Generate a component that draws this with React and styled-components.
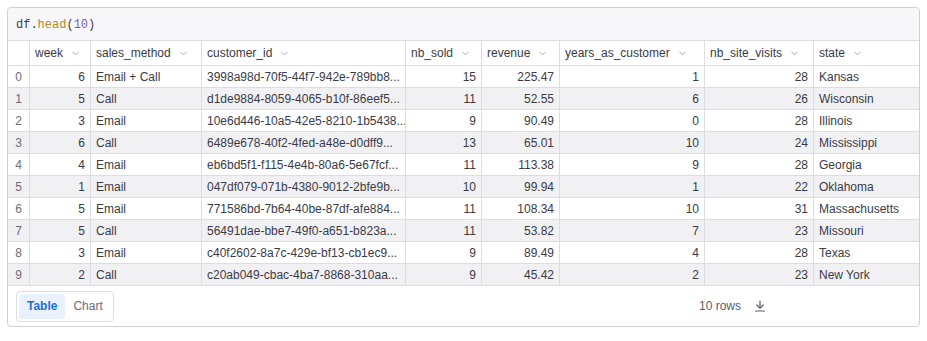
import styled, { createGlobalStyle } from 'styled-components';
import { ChevronDown } from 'lucide-react';

const GlobalStyle = createGlobalStyle`
    * { box-sizing: border-box; }
    body {
        margin: 0;
        background: #ffffff;
        font-family: "Liberation Sans", Arial, sans-serif;
        color: #2e2e3a;
    }
`;

const columns = [
    { key: 'week', label: 'week', width: 61, align: 'right' },
    { key: 'sales_method', label: 'sales_method', width: 111, align: 'left' },
    { key: 'customer_id', label: 'customer_id', width: 204, align: 'left' },
    { key: 'nb_sold', label: 'nb_sold', width: 76, align: 'right' },
    { key: 'revenue', label: 'revenue', width: 78, align: 'right' },
    { key: 'years_as_customer', label: 'years_as_customer', width: 145, align: 'right' },
    { key: 'nb_site_visits', label: 'nb_site_visits', width: 109, align: 'right' },
    { key: 'state', label: 'state', width: 105, align: 'left' },
];

const rows = [
    [6, 'Email + Call', '3998a98d-70f5-44f7-942e-789bb8...', 15, '225.47', 1, 28, 'Kansas'],
    [5, 'Call', 'd1de9884-8059-4065-b10f-86eef5...', 11, '52.55', 6, 26, 'Wisconsin'],
    [3, 'Email', '10e6d446-10a5-42e5-8210-1b5438...', 9, '90.49', 0, 28, 'Illinois'],
    [6, 'Call', '6489e678-40f2-4fed-a48e-d0dff9...', 13, '65.01', 10, 24, 'Mississippi'],
    [4, 'Email', 'eb6bd5f1-f115-4e4b-80a6-5e67fcf...', 11, '113.38', 9, 28, 'Georgia'],
    [1, 'Email', '047df079-071b-4380-9012-2bfe9b...', 10, '99.94', 1, 22, 'Oklahoma'],
    [5, 'Email', '771586bd-7b64-40be-87df-afe884...', 11, '108.34', 10, 31, 'Massachusetts'],
    [5, 'Call', '56491dae-bbe7-49f0-a651-b823a...', 11, '53.82', 7, 23, 'Missouri'],
    [3, 'Email', 'c40f2602-8a7c-429e-bf13-cb1ec9...', 9, '89.49', 4, 28, 'Texas'],
    [2, 'Call', 'c20ab049-cbac-4ba7-8868-310aa...', 9, '45.42', 2, 23, 'New York'],
];

const gridTemplate = `22px ${columns.map(c => c.width + 'px').join(' ')}`;

export default function App() {
    return (
        <Page>
            <GlobalStyle />
            <Card>
                <CodeBar>
                    <Code>
                        df.<Fn>head</Fn>(<Num>10</Num>)
                    </Code>
                </CodeBar>
                <Grid>
                    <HeadCell />
                    {columns.map((c, i) => (
                        <HeadCell key={c.key} $last={i === columns.length - 1}>
                            {c.label}
                            <ChevronDown size={11} strokeWidth={1.6} color="#8a8a99" />
                        </HeadCell>
                    ))}
                    {rows.map((row, r) => (
                        <Row key={r} $striped={r % 2 === 1}>
                            <IndexCell>{r}</IndexCell>
                            {row.map((v, i) => (
                                <Cell key={i} $align={columns[i].align} $last={i === row.length - 1}>
                                    {v}
                                </Cell>
                            ))}
                        </Row>
                    ))}
                </Grid>
                <Footer>
                    <Tabs>
                        <Tab $active>Table</Tab>
                        <Tab>Chart</Tab>
                    </Tabs>
                    <Meta>
                        <span>10 rows</span>
                        <svg width="12" height="12" viewBox="0 0 12 12" fill="none" stroke="#5a5a6a" strokeWidth="1.2" strokeLinecap="round">
                            <path d="M6 1v7" />
                            <path d="M2.8 5L6 8.2 9.2 5" />
                            <path d="M1.5 11h9" />
                        </svg>
                    </Meta>
                </Footer>
            </Card>
        </Page>
    );
}

const Page = styled.div`
    padding: 7px;
`;

const Card = styled.div`
    width: 913px;
    border: 1px solid #cfcfd7;
    border-radius: 4px;
    overflow: hidden;
    background: #ffffff;
`;

const CodeBar = styled.div`
    height: 33px;
    background: #f7f7f9;
    border-bottom: 1px solid #dcdce3;
    display: flex;
    align-items: center;
    padding-left: 8px;
`;

const Code = styled.div`
    font-family: "Liberation Mono", "DejaVu Sans Mono", monospace;
    font-size: 12px;
    color: #3c3c48;
    padding-top: 1px;
`;

const Fn = styled.span`
    color: #b08a26;
`;

const Num = styled.span`
    color: #7b5cc4;
`;

const Grid = styled.div`
    display: grid;
    grid-template-columns: ${gridTemplate};
    font-size: 12px;
`;

const Row = styled.div`
    display: contents;

    & > div {
        background: ${p => (p.$striped ? '#f1f1f4' : '#ffffff')};
    }
`;

const HeadCell = styled.div`
    height: 25px;
    display: flex;
    align-items: center;
    gap: 7px;
    padding: 0 5px;
    border-bottom: 1px solid #dcdce3;
    border-right: ${p => (p.$last ? 'none' : '1px solid #dcdce3')};
    color: #3a3a46;
    white-space: nowrap;
    overflow: hidden;

    svg {
        margin-top: 1px;
        flex-shrink: 0;
    }
`;

const Cell = styled.div`
    height: 22px;
    display: flex;
    align-items: center;
    justify-content: ${p => (p.$align === 'right' ? 'flex-end' : 'flex-start')};
    padding: 0 5px;
    border-bottom: 1px solid #dcdce3;
    border-right: ${p => (p.$last ? 'none' : '1px solid #dcdce3')};
    color: #3a3a46;
    white-space: nowrap;
    overflow: hidden;
`;

const IndexCell = styled(Cell)`
    justify-content: center;
    color: #6c6c7a;
`;

const Footer = styled.div`
    height: 40px;
    display: flex;
    align-items: center;
    justify-content: space-between;
    padding: 0 153px 0 8px;
`;

const Tabs = styled.div`
    display: flex;
    gap: 0;
    padding: 2px;
    border: 1px solid #dcdce3;
    border-radius: 4px;
`;

const Tab = styled.div`
    height: 25px;
    padding: 0 8px;
    display: flex;
    align-items: center;
    font-size: 12px;
    border-radius: 3px;
    font-weight: ${p => (p.$active ? 600 : 400)};
    color: ${p => (p.$active ? '#1f6fd4' : '#6c6c7a')};
    background: ${p => (p.$active ? '#e8f1fc' : 'transparent')};
`;

const Meta = styled.div`
    display: flex;
    align-items: center;
    gap: 13px;
    font-size: 12px;
    color: #5a5a6a;
`;
